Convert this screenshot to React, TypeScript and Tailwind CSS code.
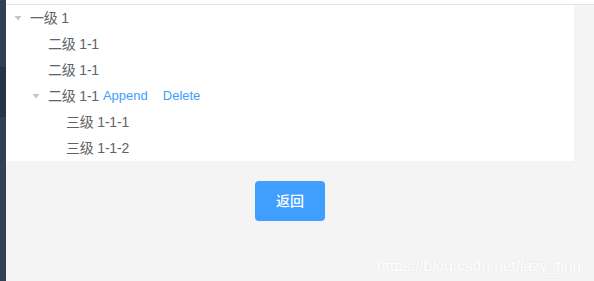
const rowText = 'text-[14px] text-[#606266]';

function Caret() {
  return (
    <svg width="12" height="12" viewBox="0 0 12 12" className="shrink-0">
      <path d="M2.5 4 L9.5 4 L6 8.5 Z" fill="#c0c4cc" />
    </svg>
  );
}

function Row({ level, label, expanded, actions }: { level: number; label: string; expanded?: boolean; actions?: boolean }) {
  const pad = ['pl-0', 'pl-[18px]', 'pl-[36px]'][level];
  return (
    <div className={`h-[26px] flex items-center ${pad}`}>
      <div className="w-[24px] pl-[6px] flex items-center">{expanded ? <Caret /> : <span className="w-[12px]" />}</div>
      <span className={`${rowText} tracking-[-0.2px]`}>{label}</span>
      {actions && (
        <span className="flex items-center ml-[4px] text-[13px] text-[#409eff]">
          <span>Append</span>
          <span className="ml-[15px]">Delete</span>
        </span>
      )}
    </div>
  );
}

export default function App() {
  return (
    <div
      className="w-[594px] h-[281px] flex bg-[#f4f4f4] overflow-hidden relative"
      style={{ fontFamily: '"Liberation Sans", "Noto Sans CJK SC", sans-serif' }}
    >
      <aside className="w-[6px] shrink-0 flex flex-col bg-[#304156]">
        <div className="h-[67px]" />
        <div className="h-[50px] bg-[#263445]" />
      </aside>
      <div className="flex-1 flex flex-col">
        <div className="h-[5px] bg-white border-b border-[#e4e4e4]" />
        <div className="w-[568px] bg-white">
          <Row level={0} label="一级 1" expanded />
          <Row level={1} label="二级 1-1" />
          <Row level={1} label="二级 1-1" />
          <Row level={1} label="二级 1-1" expanded actions />
          <Row level={2} label="三级 1-1-1" />
          <Row level={2} label="三级 1-1-2" />
        </div>
        <div className="w-[568px] flex justify-center mt-[20px]">
          <button className="w-[70px] h-[40px] rounded-[4px] bg-[#409eff] text-white text-[14px] font-medium">返回</button>
        </div>
      </div>
      <div className="absolute left-[377px] top-[254px] text-[15.5px] text-white [text-shadow:0_0_2px_rgba(0,0,0,0.08)]">
        https://blog.csdn.net/lazy_ting
      </div>
    </div>
  );
}
